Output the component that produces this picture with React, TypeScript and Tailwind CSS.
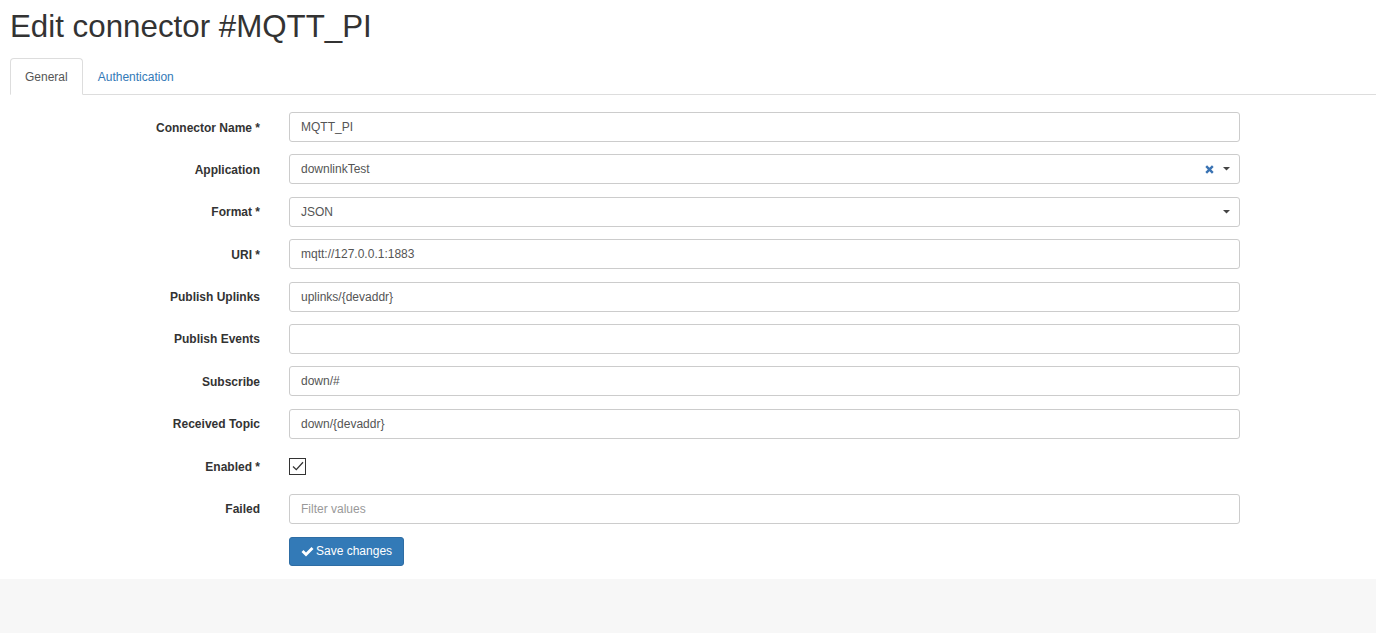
import React from "react";

/* ===== Datos ===== */
interface Campo {
  label: string;
  value?: string;
  placeholder?: string;
  kind: "text" | "select" | "select-clear" | "checkbox";
}

const campos: Campo[] = [
  { label: "Connector Name *", value: "MQTT_PI", kind: "text" },
  { label: "Application", value: "downlinkTest", kind: "select-clear" },
  { label: "Format *", value: "JSON", kind: "select" },
  { label: "URI *", value: "mqtt://127.0.0.1:1883", kind: "text" },
  { label: "Publish Uplinks", value: "uplinks/{devaddr}", kind: "text" },
  { label: "Publish Events", value: "", kind: "text" },
  { label: "Subscribe", value: "down/#", kind: "text" },
  { label: "Received Topic", value: "down/{devaddr}", kind: "text" },
  { label: "Enabled *", kind: "checkbox" },
  { label: "Failed", placeholder: "Filter values", kind: "text" },
];

const Caret = () => (
  <svg width="7" height="4" viewBox="0 0 7 4" className="ml-[9px]">
    <path d="M0 0 L7 0 L3.5 3.5 Z" fill="#444" />
  </svg>
);

const Control: React.FC<{ campo: Campo }> = ({ campo }) => {
  if (campo.kind === "checkbox") {
    return (
      <div className="flex h-[30px] items-center">
        <div className="flex h-[17px] w-[17px] items-center justify-center border border-[#333] bg-white">
          <svg width="12" height="10" viewBox="0 0 12 10">
            <path d="M1 5.5 L4.3 8.6 L11 1.3" stroke="#333" strokeWidth="1.3" fill="none" />
          </svg>
        </div>
      </div>
    );
  }

  return (
    <div className="flex h-[30px] w-[951px] items-center rounded-[3px] border border-[#cccccc] bg-white pl-[11px] pr-[9px] text-[12px] text-[#555]">
      <span className={campo.value ? "flex-1" : "flex-1 text-[#999]"}>
        {campo.value || campo.placeholder}
      </span>
      {campo.kind === "select-clear" && (
        <svg width="9" height="9" viewBox="0 0 9 9">
          <path d="M1.2 1.2 L7.8 7.8 M7.8 1.2 L1.2 7.8" stroke="#3a73b3" strokeWidth="2.4" />
        </svg>
      )}
      {campo.kind !== "text" && <Caret />}
    </div>
  );
};

const App: React.FC = () => {
  return (
    <div className="flex min-h-[633px] flex-col bg-[#f7f7f7] font-['Liberation_Sans',Arial,sans-serif] text-[#333]">
      <div className="bg-white pb-[13px]">
        {/* Titulo */}
        <h1 className="pl-[10px] pt-[9px] text-[31.3px] leading-[36px] text-[#333]">
          Edit connector #MQTT_PI
        </h1>

        {/* Tabs */}
        <div className="ml-[10px] mt-[13px] flex h-[37px] border-b border-[#dddddd] text-[12px]">
          <div className="-mb-px flex items-center rounded-t-[4px] border border-[#dddddd] border-b-white bg-white px-[14px] pt-px text-[#555]">
            General
          </div>
          <div className="flex items-center px-[15px] pt-px text-[#337ab7]">Authentication</div>
        </div>

        {/* Formulario */}
        <div className="mt-[17px] flex flex-col gap-[12.4px]">
          {campos.map((c) => (
            <div key={c.label} className="flex items-center">
              <label className="w-[260px] pt-px text-right text-[12px] font-bold text-[#333]">
                {c.label}
              </label>
              <div className="ml-[29px]">
                <Control campo={c} />
              </div>
            </div>
          ))}

          <div className="flex">
            <div className="ml-[289px] pt-px">
              <button className="flex h-[29px] items-center rounded-[3px] border border-[#2e6da4] bg-[#337ab7] px-[11px] text-[12px] text-white">
                <svg width="13" height="11" viewBox="0 0 13 11" className="mr-[2px]">
                  <path d="M0.5 6 L2.5 4 L5 6.5 L10.5 1 L12.5 3 L5 10.5 Z" fill="white" />
                </svg>
                Save changes
              </button>
            </div>
          </div>
        </div>
      </div>
    </div>
  );
};

export default App;
